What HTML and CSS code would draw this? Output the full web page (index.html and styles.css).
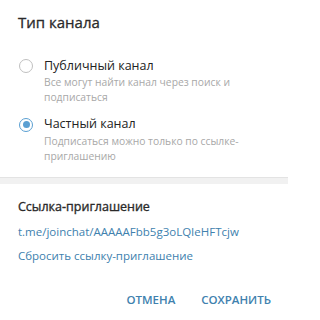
FILE: index.html
```html
<!DOCTYPE html>
<html lang="ru">
<head>
<meta charset="utf-8">
<link rel="stylesheet" href="styles.css">
</head>
<body>
<div class="dialog">
  <div class="section">
    <div class="title">Тип канала</div>
    <div class="options">
      <div class="option">
        <span class="radio"></span>
        <div class="option-text">
          <div class="option-label">Публичный канал</div>
          <div class="option-desc">Все могут найти канал через поиск и подписаться</div>
        </div>
      </div>
      <div class="option">
        <span class="radio checked"></span>
        <div class="option-text">
          <div class="option-label">Частный канал</div>
          <div class="option-desc">Подписаться можно только по ссылке-приглашению</div>
        </div>
      </div>
    </div>
  </div>
  <div class="divider"></div>
  <div class="section link-section">
    <div class="subtitle">Ссылка-приглашение</div>
    <div class="link">t.me/joinchat/AAAAAFbb5g3oLQIeHFTcjw</div>
    <div class="link">Сбросить ссылку-приглашение</div>
  </div>
  <div class="actions">
    <span class="btn">ОТМЕНА</span>
    <span class="btn">СОХРАНИТЬ</span>
  </div>
</div>
</body>
</html>
```
FILE: styles.css
```css
html, body {
  margin: 0;
  padding: 0;
  background: #ffffff;
}
body {
  font-family: "Open Sans", "Noto Sans", sans-serif;
  color: #222222;
  width: 288px;
  height: 320px;
  overflow: hidden;
}
.dialog {
  display: flex;
  flex-direction: column;
}
.section {
  padding: 0 18px;
}
.title {
  font-size: 15px;
  font-weight: 400;
  -webkit-text-stroke: 0.3px #2a2a2a;
  color: #2a2a2a;
  padding-top: 12px;
  line-height: 20px;
}
.options {
  display: flex;
  flex-direction: column;
  gap: 11px;
  padding-top: 25.5px;
  padding-bottom: 13px;
}
.option {
  display: flex;
  gap: 11px;
  align-items: flex-start;
  margin-left: 1px;
}
.radio {
  width: 12px;
  height: 12px;
  border: 1.5px solid #c0c0c0;
  border-radius: 50%;
  margin-top: 1.5px;
  flex: none;
  box-sizing: content-box;
  position: relative;
}
.radio.checked {
  border-color: #5a9fd2;
}
.radio.checked::after {
  content: "";
  position: absolute;
  left: 2.5px;
  top: 2.5px;
  width: 7px;
  height: 7px;
  border-radius: 50%;
  background: #5a9fd2;
}
.option-label {
  font-size: 12.5px;
  line-height: 16px;
  color: #222;
}
.option-desc {
  font-size: 10.3px;
  line-height: 15px;
  color: #a8a8a8;
  margin-top: 1.5px;
}
.divider {
  height: 6px;
  background: #f1f1f1;
  border-top: 1px solid #e3e3e3;
}
.link-section {
  padding-top: 14.5px;
}
.subtitle {
  font-size: 12.5px;
  font-weight: 400;
  -webkit-text-stroke: 0.35px #2a2a2a;
  color: #2a2a2a;
  line-height: 18px;
}
.link {
  font-size: 11.5px;
  line-height: 16px;
  color: #4081ae;
  margin-top: 8px;
}
.actions {
  display: flex;
  justify-content: flex-end;
  gap: 26px;
  padding: 28px 17px 0 0;
}
.btn {
  font-size: 11.5px;
  font-weight: 600;
  color: #4081ae;
  line-height: 16px;
}
```
